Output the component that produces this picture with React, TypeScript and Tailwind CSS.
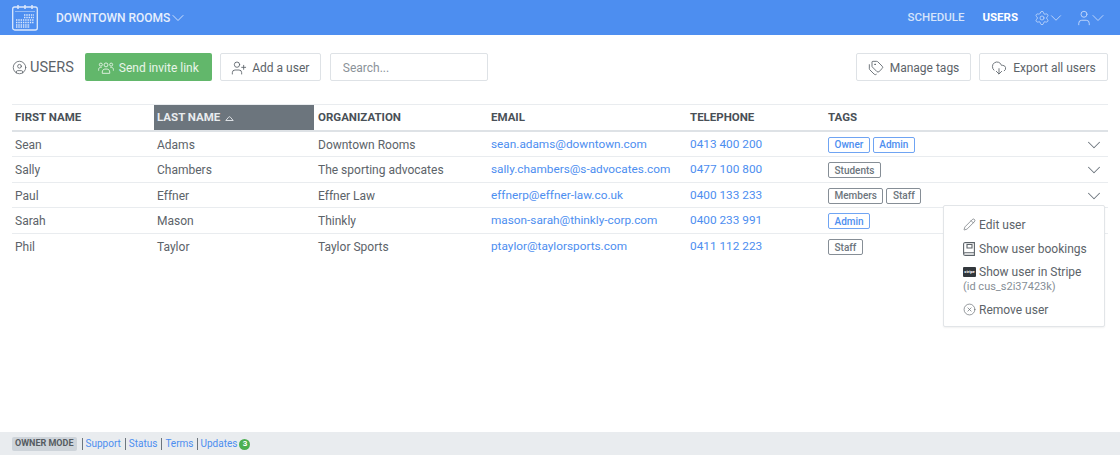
import React from 'react';
import { ChevronDown, Settings, User, CircleUser, UserPlus, Tags, CloudDownload, Pencil, CircleX } from 'lucide-react';

const users = [
  { first: 'Sean', last: 'Adams', org: 'Downtown Rooms', email: 'sean.adams@downtown.com', tel: '0413 400 200', tags: ['Owner', 'Admin'], arrow: true, h: 'h-[25px] border-b' },
  { first: 'Sally', last: 'Chambers', org: 'The sporting advocates', email: 'sally.chambers@s-advocates.com', tel: '0477 100 800', tags: ['Students'], arrow: true, h: 'h-[26px] border-b' },
  { first: 'Paul', last: 'Effner', org: 'Effner Law', email: 'effnerp@effner-law.co.uk', tel: '0400 133 233', tags: ['Members', 'Staff'], arrow: true, h: 'h-[25px] border-b' },
  { first: 'Sarah', last: 'Mason', org: 'Thinkly', email: 'mason-sarah@thinkly-corp.com', tel: '0400 233 991', tags: ['Admin'], arrow: false, h: 'h-[26px] border-b' },
  { first: 'Phil', last: 'Taylor', org: 'Taylor Sports', email: 'ptaylor@taylorsports.com', tel: '0411 112 223', tags: ['Staff'], arrow: false, h: 'h-[25px]' },
];

const CalendarLogo = () => (
  <svg viewBox="0 0 26 27" className="h-[27px] w-[26px] text-[#dbe8fc]" fill="none" stroke="currentColor">
    <rect x="0.7" y="3" width="24.6" height="23" rx="2" strokeWidth="1.3" />
    <path d="M6 1v4M13 1v4M20 1v4" strokeWidth="1.5" />
    <path d="M3.5 7.5h19" strokeWidth="1" strokeDasharray="1 1" />
    <path d="M12 11h10M12 13.5h10M4 16h18M4 18.5h18M4 21h14M4 23h14" strokeWidth="1.4" strokeDasharray="1.4 0.9" />
  </svg>
);

const GroupIcon = () => (
  <svg viewBox="0 0 18 14" className="h-[14px] w-[16px]" fill="none" stroke="currentColor" strokeWidth="1">
    <circle cx="9" cy="3.5" r="2.2" />
    <path d="M4.8 13v-1.500c0-2 1.500-3.300 3-3.300h2.400c1.500 0 3 1.300 3 3.300V13z" />
    <circle cx="3.200" cy="3.200" r="1.700" />
    <circle cx="14.800" cy="3.200" r="1.700" />
    <path d="M0.700 10V8.500c0-1.300 1-2.200 2.200-2.200h1.200M17.300 10V8.500c0-1.300-1-2.200-2.200-2.200h-1.200" />
  </svg>
);

const LedgerIcon = () => (
  <svg viewBox="0 0 12 14" className="h-[14px] w-[12px]" fill="none" stroke="currentColor" strokeWidth="1.1">
    <path d="M2.500 0.600h8.900v10.200H2.500a1.400 1.400 0 0 0-1.900 1.300V2.200A1.600 1.600 0 0 1 2.500 0.600z" />
    <path d="M0.600 12c0 .9.700 1.400 1.900 1.400h8.900v-2.600" />
    <path d="M4 2.500h5v3.500H4z" />
  </svg>
);

const SortCaret = () => (
  <svg viewBox="0 0 9 5" className="h-[5px] w-[9px]" fill="none" stroke="currentColor" strokeWidth="0.9">
    <path d="M0.800 4.500 3.600 1.200a1.200 1.200 0 0 1 1.800 0L8.200 4.500z" />
  </svg>
);

const Tag = ({ label }: { label: string }) => {
  const blue = label === 'Owner' || label === 'Admin';
  return (
    <span className={`inline-flex h-[16px] items-center rounded-[2px] border px-[5.5px] text-[10px] font-medium ${blue ? 'border-[#6fa4f3] text-[#4d8ef0]' : 'border-[#868e96] text-[#6c757d]'}`}>
      {label}
    </span>
  );
};

const App: React.FC = () => {
  return (
    <div className="flex h-[455px] w-[1120px] flex-col overflow-hidden bg-white font-['Roboto',sans-serif] text-[12px] text-[#5c6369]">
      {/* Top bar */}
      <header className="flex h-[35px] shrink-0 items-center bg-[#4d8ef0] pl-[12px] pr-[12px] text-white">
        <CalendarLogo />
        <span className="ml-[18px] text-[12px] font-medium text-[#e6effd]">DOWNTOWN ROOMS</span>
        <ChevronDown className="-ml-[2px] h-[20px] w-[20px] text-[#dbe8fc]" strokeWidth={1.1} />
        <span className="ml-auto text-[11.5px] font-medium text-[#d5e4fb]">SCHEDULE</span>
        <span className="ml-[18px] text-[11.5px] font-bold text-white">USERS</span>
        <Settings className="ml-[16px] h-[16px] w-[16px] text-[#c6dafa]" strokeWidth={1.2} />
        <ChevronDown className="-ml-[3px] h-[18px] w-[18px] text-[#c6dafa]" strokeWidth={1.2} />
        <User className="ml-[10px] h-[18px] w-[18px] text-[#c6dafa]" strokeWidth={1.2} />
        <ChevronDown className="-ml-[5px] h-[20px] w-[20px] text-[#c6dafa]" strokeWidth={1.1} />
      </header>

      {/* Toolbar */}
      <div className="flex items-center px-[12px] pt-[18px]">
        <CircleUser className="h-[15px] w-[15px]" strokeWidth={1.3} />
        <span className="ml-[3px] pt-[2px] text-[14.5px]">USERS</span>
        <button className="ml-[11px] flex h-[28px] w-[127px] items-center justify-center gap-[5px] rounded-[2px] bg-[#62b76b] pt-[2px] text-[#e8f5e9]">
          <GroupIcon />
          Send invite link
        </button>
        <button className="ml-[8px] flex h-[28px] w-[101px] items-center justify-center gap-[5px] rounded-[2px] border border-[#dee2e6] pt-[2px]">
          <UserPlus className="h-[16px] w-[16px]" strokeWidth={1.3} />
          Add a user
        </button>
        <input
          placeholder="Search..."
          className="ml-[9px] h-[28px] w-[158px] rounded-[2px] border border-[#dee2e6] px-[12px] pt-[2px] outline-none placeholder:text-[#8b9299]"
        />
        <button className="ml-auto flex h-[28px] w-[115px] items-center justify-center gap-[6px] rounded-[2px] border border-[#dee2e6] pt-[2px]">
          <Tags className="h-[16px] w-[16px]" strokeWidth={1.3} />
          Manage tags
        </button>
        <button className="ml-[8px] flex h-[28px] w-[129px] items-center justify-center gap-[6px] rounded-[2px] border border-[#dee2e6] pt-[2px]">
          <CloudDownload className="h-[16px] w-[16px]" strokeWidth={1.3} />
          Export all users
        </button>
      </div>

      {/* Users table */}
      <div className="relative mx-[12px] mt-[23px] flex-1 whitespace-nowrap">
        <div className="grid h-[28px] grid-cols-[142px_160px_173px_199px_138px_1fr] items-stretch border-t border-b-2 border-t-[#e9ecef] border-b-[#dee2e6] text-[11.5px] font-bold text-[#495057]">
          <div className="flex items-center pl-[3px] pt-[1px]">FIRST NAME</div>
          <div className="flex items-center gap-[5px] bg-[#6c757d] pl-[3px] pt-[1px] text-[#e9ecef]">
            LAST NAME
            <SortCaret />
          </div>
          <div className="flex items-center pl-[4px] pt-[1px]">ORGANIZATION</div>
          <div className="flex items-center pl-[4px] pt-[1px]">EMAIL</div>
          <div className="flex items-center pl-[4px] pt-[1px]">TELEPHONE</div>
          <div className="flex items-center pl-[4px] pt-[1px]">TAGS</div>
        </div>
        {users.map((u) => (
          <div key={u.first} className={`grid ${u.h} grid-cols-[142px_160px_173px_199px_138px_1fr] items-center border-[#e9ecef] pt-[1px]`}>
            <div className="pl-[3px]">{u.first}</div>
            <div className="pl-[3px]">{u.last}</div>
            <div className="pl-[4px]">{u.org}</div>
            <div className="pl-[4px] text-[11.8px] text-[#4d8ef0]">{u.email}</div>
            <div className="pl-[4px] text-[11.8px] text-[#4d8ef0]">{u.tel}</div>
            <div className="flex items-center pl-[4px] pr-[3px]">
              <span className="flex gap-[3px]">
                {u.tags.map((t) => (
                  <Tag key={t} label={t} />
                ))}
              </span>
              {u.arrow && <ChevronDown className="-my-[3px] ml-auto h-[22px] w-[22px] text-[#6c757d]" strokeWidth={1.1} />}
            </div>
          </div>
        ))}

        {/* Row menu */}
        <div className="absolute left-[931px] top-[101px] h-[122px] w-[162px] rounded-[2px] border border-[#e2e5e8] bg-white pl-[19px] pt-[7px] shadow-[0_1px_2px_rgba(0,0,0,0.06)]">
          <div className="flex h-[23px] items-center gap-[3px]">
            <Pencil className="h-[13px] w-[13px]" strokeWidth={1.2} />
            Edit user
          </div>
          <div className="mt-[1px] flex h-[23px] items-center gap-[4px]">
            <LedgerIcon />
            Show user bookings
          </div>
          <div className="flex h-[23px] items-center gap-[3px]">
            <span className="flex h-[10px] w-[13px] items-center justify-center rounded-[1px] bg-[#32373c] text-[4px] font-bold text-white">stripe</span>
            Show user in Stripe
          </div>
          <div className="-mt-[1px] text-[11px] leading-[10px] text-[#868e96]">(id cus_s2i37423k)</div>
          <div className="mt-[6px] flex h-[23px] items-center gap-[3px]">
            <CircleX className="h-[13px] w-[13px]" strokeWidth={1.2} />
            Remove user
          </div>
        </div>
      </div>

      {/* Footer */}
      <footer className="flex h-[23px] shrink-0 items-center bg-[#e9ecef] pl-[12px] pt-[1px] text-[10px] text-[#4d8ef0]">
        <span className="mr-[5px] rounded-[2px] bg-[#ced4da] px-[3px] text-[9px] font-bold text-[#555b61]">OWNER MODE</span>
        <span className="border-l border-[#6c757d] pl-[3px] pr-[4px] leading-[12px]">Support</span>
        <span className="border-l border-[#6c757d] pl-[3px] pr-[4px] leading-[12px]">Status</span>
        <span className="border-l border-[#6c757d] pl-[3px] pr-[3px] leading-[12px]">Terms</span>
        <span className="border-l border-[#6c757d] pl-[3px] leading-[12px]">Updates</span>
        <span className="ml-[2px] flex h-[11px] w-[11px] items-center justify-center rounded-full bg-[#4caf50] text-[8px] font-bold text-white">3</span>
      </footer>
    </div>
  );
};

export default App;
